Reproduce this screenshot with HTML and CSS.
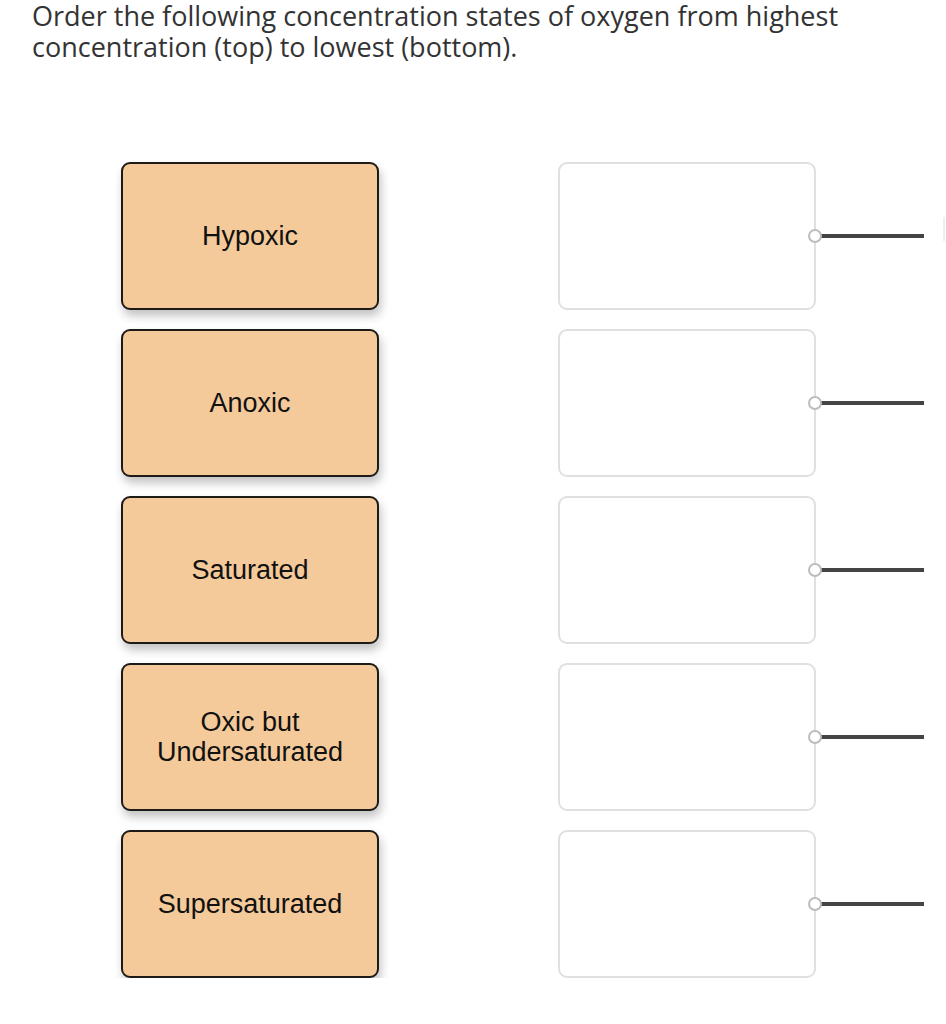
FILE: index.html
```html
<!DOCTYPE html>
<html lang="en">
<head>
    <meta charset="UTF-8">
    <meta name="viewport" content="width=device-width, initial-scale=1.0">
    <title>Ordering Question</title>
    <link rel="stylesheet" href="styles.css">
</head>
<body>

    <p class="prompt">Order the following concentration states of oxygen from highest concentration (top) to lowest (bottom).</p>

    <div class="board">
        <div class="choices">
            <div class="card">Hypoxic</div>
            <div class="card">Anoxic</div>
            <div class="card">Saturated</div>
            <div class="card">Oxic but<br>Undersaturated</div>
            <div class="card">Supersaturated</div>
        </div>

        <div class="slots">
            <div class="slot-row">
                <div class="slot"><span class="knob"></span></div>
                <div class="wire"></div>
                <div class="edge"></div>
            </div>
            <div class="slot-row">
                <div class="slot"><span class="knob"></span></div>
                <div class="wire"></div>
            </div>
            <div class="slot-row">
                <div class="slot"><span class="knob"></span></div>
                <div class="wire"></div>
            </div>
            <div class="slot-row">
                <div class="slot"><span class="knob"></span></div>
                <div class="wire"></div>
            </div>
            <div class="slot-row">
                <div class="slot"><span class="knob"></span></div>
                <div class="wire"></div>
            </div>
        </div>
    </div>

</body>
</html>
```

FILE: styles.css
```css
body {
    margin: 0;
    padding: 0;
    background-color: #fff;
    font-family: 'Open Sans', Lato, sans-serif;
    color: #333;
}

.prompt {
    margin: 0;
    padding: 0 0 0 32px;
    width: 880px;
    font-size: 27px;
    line-height: 31px;
    font-variant-ligatures: none;
}

.board {
    display: flex;
    margin-top: 100px;
    padding-left: 121px;
}

.choices,
.slots {
    display: flex;
    flex-direction: column;
    gap: 19px;
}

.card {
    box-sizing: border-box;
    width: 258px;
    height: 148px;
    display: flex;
    align-items: center;
    justify-content: center;
    text-align: center;
    background-color: #f5ca9a;
    border: 2px solid #1e1a17;
    border-radius: 9px;
    box-shadow: 2px 6px 10px rgba(0, 0, 0, 0.24);
    font-family: 'Liberation Sans', Arial, sans-serif;
    font-size: 27px;
    line-height: 30px;
    color: #111;
}

.slots {
    margin-left: 179px;
}

.slot-row {
    display: flex;
    align-items: center;
    height: 148px;
}

.slot {
    position: relative;
    box-sizing: border-box;
    width: 258px;
    height: 148px;
    border: 2px solid #e0e0e0;
    border-radius: 9px;
    background-color: #fff;
}

/* handle sitting on the right border */
.knob {
    position: absolute;
    right: -8px;
    top: 50%;
    width: 10px;
    height: 10px;
    margin-top: -7px;
    border: 2px solid #bdbdbd;
    border-radius: 50%;
    background-color: #fff;
}

.wire {
    width: 103px;
    height: 4px;
    margin-left: 5px;
    background-color: #444;
}

.edge {
    width: 2px;
    height: 24px;
    margin-left: 19px;
    margin-top: -14px;
    background-color: #eee;
}
```
